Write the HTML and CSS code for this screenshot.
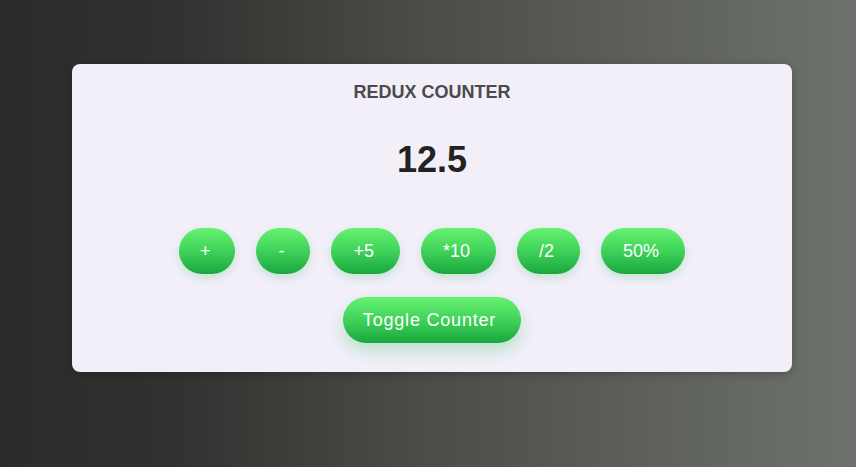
FILE: index.html
```html
<!DOCTYPE html>
<html lang="en">
<head>
<meta charset="utf-8">
<title>Redux Counter</title>
<link rel="stylesheet" href="styles.css">
</head>
<body>
<main class="page">
  <section class="card">
    <h1 class="title">REDUX COUNTER</h1>
    <div class="value">12.5</div>
    <div class="actions">
      <button class="btn btn-plus">+</button>
      <button class="btn">-</button>
      <button class="btn">+5</button>
      <button class="btn">*10</button>
      <button class="btn">/2</button>
      <button class="btn">50%</button>
    </div>
    <button class="btn btn-toggle">Toggle Counter</button>
  </section>
</main>
</body>
</html>
```
FILE: styles.css
```css
html, body {
  margin: 0;
  padding: 0;
  height: 100%;
}
body {
  background: linear-gradient(to right, #2a2c29 0%, #30322f 20%, #4b4d49 50%, #6e726d 100%);
  font-family: "Liberation Sans", Arial, sans-serif;
}
.page {
  display: flex;
  justify-content: center;
  align-items: flex-start;
  padding: 64px 0 0 8px;
}
.card {
  width: 720px;
  box-sizing: border-box;
  background: #f2eff9;
  border-radius: 8px;
  box-shadow: 0 2px 8px rgba(0, 0, 0, 0.25);
  padding: 17px 0 29px;
  display: flex;
  flex-direction: column;
  align-items: center;
}
.title {
  margin: 0;
  font-size: 18px;
  line-height: 22px;
  font-weight: bold;
  color: #4a4a4a;
}
.value {
  margin-top: 36px;
  font-size: 36px;
  line-height: 42px;
  font-weight: bold;
  color: #222222;
}
.actions {
  margin-top: 47px;
  display: flex;
  gap: 21px;
}
.btn {
  height: 46px;
  padding: 0 26px 0 22px;
  border: none;
  border-radius: 23px;
  background: linear-gradient(to bottom, #67f270 0%, #3fd25a 50%, #19a73d 100%);
  color: #ffffff;
  font-family: "Liberation Sans", Arial, sans-serif;
  font-size: 18px;
  box-shadow: 0 4px 10px rgba(40, 170, 80, 0.2);
  cursor: pointer;
}
.btn-plus {
  padding: 0 25px 0 21px;
}
.btn-toggle {
  margin-top: 23px;
  letter-spacing: 0.8px;
  padding: 0 25px 0 20px;
  box-shadow: 0 8px 16px rgba(40, 190, 90, 0.28);
}
```
